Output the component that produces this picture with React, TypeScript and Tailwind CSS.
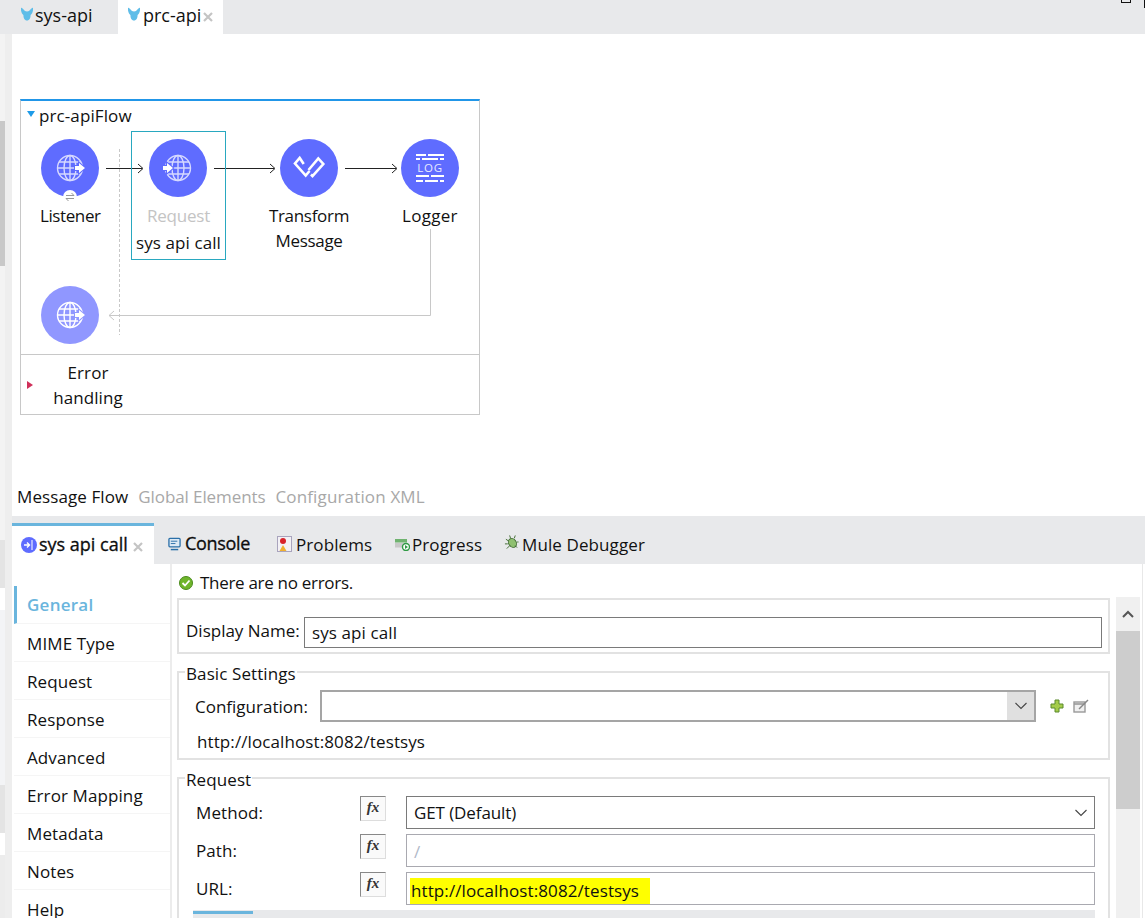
import type { ReactNode } from 'react';

const NAV_ITEMS = ['MIME Type', 'Request', 'Response', 'Advanced', 'Error Mapping', 'Metadata', 'Notes', 'Help'];

function MuleIcon({ className }: { className?: string }) {
  return (
    <svg viewBox="0 0 12 14" className={className}>
      <path d="M0 1 C1 0 2.5 3 4 4 C5 4.6 7 4.6 8 4 C9.5 3 11 0 12 1 C12.4 4 11 7 9.6 8 C9.6 11 8.4 13.5 6 13.5 C3.6 13.5 2.4 11 2.4 8 C1 7 -.4 4 0 1 Z" fill="#5fbde8" />
    </svg>
  );
}

function CloseIcon({ className }: { className?: string }) {
  return (
    <svg viewBox="0 0 10 10" className={className}>
      <path d="M1 1 L9 9 M9 1 L1 9" stroke="#c4c4c4" strokeWidth="2.2" />
    </svg>
  );
}

function GlobeIcon({ out, bg = '#5f6cff', color = '#d6d9ff' }: { out: boolean; bg?: string; color?: string }) {
  return (
    <svg viewBox="0 0 30 28" className="h-7 w-[30px]" fill="none" stroke={color} strokeWidth="1.4">
      <circle cx="15" cy="14" r="12.5" />
      <ellipse cx="15" cy="14" rx="6" ry="12.5" />
      <path d="M15 1.5 V26.5 M4 8 H26 M2.5 14 H27.5 M4 20 H26" />
      {out ? (
        <path d="M20 12 H24 V9 L30 14 L24 19 V16 H20 Z" fill="#fff" stroke={bg} strokeWidth="2" paintOrder="stroke" />
      ) : (
        <path d="M0 12 H4 V9 L10 14 L4 19 V16 H0 Z" fill="#fff" stroke={bg} strokeWidth="2" paintOrder="stroke" />
      )}
    </svg>
  );
}

function FlowNode({ left, top, tone, children }: { left: string; top: string; tone: string; children: ReactNode }) {
  return (
    <div className={`absolute flex h-[58px] w-[58px] items-center justify-center rounded-full ${left} ${top} ${tone}`}>
      {children}
    </div>
  );
}

function TransformIcon() {
  return (
    <svg viewBox="0 0 40 36" className="h-[36px] w-[40px]" fill="none" stroke="#fff" strokeWidth="2.6">
      <path d="M14.7 14 L10.7 8 L6 13.5 L16.7 25.5 L20.5 21" />
      <path d="M19.5 20 L29.3 8.5 L34.3 14 L23.5 26 L22 24.5" />
    </svg>
  );
}

function LogIcon() {
  return (
    <svg viewBox="0 0 28 28" className="h-7 w-7">
      <path d="M0 1 H10 M12 1 H28 M0 5 H4 M6 5 H22 M24 5 H28 M0 22 H13 M15 22 H28 M0 27 H7 M9 27 H22 M24 27 H28" stroke="#fff" strokeWidth="2" />
      <text x="14" y="18" textAnchor="middle" fontSize="11.5" fill="#e8eaff" letterSpacing=".7">LOG</text>
    </svg>
  );
}

function Flow() {
  return (
    <div className="relative h-[316px] w-[460px] border border-t-2 border-[#c8c8c8] border-t-[#2196e8]">
      <div className="flex h-[29px] items-center pl-[6px]">
        <span className="mb-[4px] h-0 w-0 border-x-[4px] border-t-[6px] border-x-transparent border-t-[#1e9be8]" />
        <span className="ml-[4px] mt-[1px]">prc-apiFlow</span>
      </div>

      {/* connectors */}
      <svg className="absolute left-[-1px] top-[-2px] h-[316px] w-[460px]" viewBox="0 0 460 316" fill="none">
        <path d="M99.5 50 V236" stroke="#c8c8c8" strokeDasharray="3 2" />
        <path d="M86 69.5 H122 M118 65 L123 69.5 L118 74" stroke="#222" />
        <path d="M194 69.5 H254 M250 65 L255 69.5 L250 74" stroke="#222" />
        <path d="M325 69.5 H376 M372 65 L377 69.5 L372 74" stroke="#222" />
        <path d="M410.5 130 V216.5 H89 M94 212 L89 216.5 L94 221" stroke="#c8c8c8" />
      </svg>

      <FlowNode left="left-[20px]" top="top-[38px]" tone="bg-[#5f6cff]">
        <GlobeIcon out />
        <span className="absolute bottom-[-7px] left-[22px] flex h-[14px] w-[14px] items-center justify-center rounded-full bg-white">
          <svg viewBox="0 0 10 10" className="h-[10px] w-[10px]" fill="none" stroke="#999" strokeWidth="1">
            <path d="M1 3.5 H9 L6.5 1 M9 6.5 H1 L3.5 9" />
          </svg>
        </span>
      </FlowNode>
      <FlowNode left="left-[128px]" top="top-[38px]" tone="bg-[#5f6cff]">
        <GlobeIcon out={false} />
      </FlowNode>
      <FlowNode left="left-[259px]" top="top-[38px]" tone="bg-[#5f6cff]">
        <TransformIcon />
      </FlowNode>
      <FlowNode left="left-[380px]" top="top-[38px]" tone="bg-[#5f6cff]">
        <LogIcon />
      </FlowNode>
      <FlowNode left="left-[20px]" top="top-[185px]" tone="bg-[#9097ff]">
        <GlobeIcon out bg="#9097ff" color="#ffffff" />
      </FlowNode>

      <span className="absolute left-[19px] top-[102px] leading-[25px] tracking-[-0.4px]">Listener</span>

      <div className="absolute left-[110px] top-[30px] flex h-[129px] w-[95px] flex-col items-center border border-[#29a8c0] pt-[71px] leading-[25px]">
        <span className="tracking-[-0.2px] text-[#c4c4c4]">Request</span>
        <span className="mt-[2px] whitespace-nowrap">sys api call</span>
      </div>

      <div className="absolute left-[238px] top-[102px] w-[100px] text-center leading-[25px] tracking-[-0.3px]">
        Transform
        <br />
        Message
      </div>
      <span className="absolute left-[381px] top-[102px] leading-[25px] tracking-[0.3px]">Logger</span>

      <div className="absolute bottom-0 left-0 flex h-[60px] w-full items-center border-t border-[#c8c8c8] pl-[6px]">
        <span className="h-0 w-0 border-y-[4px] border-l-[6px] border-y-transparent border-l-[#d0305a]" />
        <div className="ml-[20px] w-[70px] text-center leading-[25px]">
          Error
          <br />
          handling
        </div>
      </div>
    </div>
  );
}

function BottomTab({ icon, label, width, gap }: { icon: ReactNode; label: string; width: string; gap: string }) {
  return (
    <div className={`flex items-center ${width} ${gap}`}>
      {icon}
      <span className="pt-[2px]">{label}</span>
    </div>
  );
}

function FxButton() {
  return (
    <div className="flex h-[25px] w-[26px] items-center justify-center border border-[#ddd] border-l-[#888] border-t-[#888] bg-[#fafafa] pb-[3px] font-['Liberation_Serif',serif] text-[15px] font-bold italic text-[#333]">
      fx
    </div>
  );
}

function Chevron() {
  return (
    <svg viewBox="0 0 12 8" className="h-[8px] w-[12px]" fill="none" stroke="#444" strokeWidth="1.1">
      <path d="M.5 1 L6 6.5 L11.5 1" />
    </svg>
  );
}

function RequestRow({ label, children, border }: { label: string; children: ReactNode; border: string }) {
  return (
    <div className="flex h-[33px] items-start">
      <span className="w-[164px] self-center">{label}</span>
      <FxButton />
      <div className={`ml-[20px] flex h-[33px] flex-1 items-center border px-[7px] ${border}`}>{children}</div>
    </div>
  );
}

export default function App() {
  return (
    <div className="relative flex h-[918px] w-[1145px] flex-col overflow-hidden bg-white font-['Open_Sans',sans-serif] text-[17px] tracking-[0.1px] text-[#111]">
      {/* bits of the window frame caught in the screenshot */}
      <div className="absolute right-[14px] top-0 h-[3px] w-[10px] border-x border-b border-[#111]" />
      <div className="absolute right-0 top-0 h-[8px] w-[1px] bg-[#111]" />

      {/* editor tabs */}
      <div className="flex h-[34px] shrink-0 items-end bg-[#e8e9eb] pl-[21px] text-[18px] tracking-normal">
        <div className="flex h-[34px] w-[97px] items-center gap-[2px]">
          <MuleIcon className="mb-[6px] h-[14px] w-[12px]" />
          <span className="mb-[4px]">sys-api</span>
        </div>
        <div className="flex h-[34px] w-[105px] items-center bg-white pl-[10px]">
          <MuleIcon className="mb-[6px] h-[14px] w-[12px]" />
          <span className="mb-[4px] ml-[3px]">prc-api</span>
          <CloseIcon className="ml-[2px] h-[10px] w-[10px]" />
        </div>
      </div>

      <div className="flex min-h-0 flex-1">
        {/* left gutter */}
        <div className="flex w-[12px] shrink-0 bg-[#eeeeee]">
          <div className="w-[5px]">
            <div className="h-[87px] bg-[#f3f3f3]" />
            <div className="h-[145px] bg-[#c8c8c8]" />
            <div className="h-[274px] bg-[#f3f3f3]" />
            <div className="h-[48px] bg-[#e4e4e4]" />
            <div className="h-[22px] bg-white" />
            <div className="h-[175px] bg-[#f3f4f6]" />
            <div className="h-[48px] bg-[#e4e4e4]" />
            <div className="h-[22px] bg-white" />
            <div className="h-[63px] bg-[#ececec]" />
          </div>
        </div>

        <div className="flex min-w-0 flex-1 flex-col">
          {/* canvas */}
          <div className="h-[482px] shrink-0 pl-[8px] pt-[65px]">
            <Flow />
            <div className="ml-[-3px] mt-[70px] flex h-[24px] items-center gap-[10px] whitespace-nowrap">
              <span className="tracking-[0.1px]">Message Flow</span>
              <span className="tracking-[-0.1px] text-[#a8a8a8]">Global Elements</span>
              <span className="tracking-[0.15px] text-[#a8a8a8]">Configuration XML</span>
            </div>
          </div>

          {/* views tab bar */}
          <div className="flex h-[48px] shrink-0 items-end bg-[#e8e9eb]">
            <div className="flex h-[41px] w-[142px] items-center border-t-[3px] border-[#6ab5dd] bg-white pl-[9px]">
              <span className="flex h-4 w-4 items-center justify-center rounded-full bg-[#5f6cff]">
                <svg viewBox="0 0 12 12" className="h-3 w-3" fill="none" stroke="#d6d9ff">
                  <path d="M9 1 V11" strokeWidth="1.4" />
                  <path d="M1 6 H6 M4 3.5 L6.5 6 L4 8.5" stroke="#fff" strokeWidth="1.4" />
                </svg>
              </span>
              <span className="mb-[2px] ml-[2px] whitespace-nowrap text-[18px] tracking-normal [-webkit-text-stroke:0.3px_#000]">sys api call</span>
              <CloseIcon className="ml-[5px] mt-[4px] h-[10px] w-[10px]" />
            </div>
            <div className="flex h-[41px] items-center whitespace-nowrap pl-[14px]">
              <div className="flex w-[109px] items-center gap-[4px]">
                <svg viewBox="0 0 14 14" className="h-[14px] w-[13px]">
                  <rect x="1" y="1" width="12" height="9" rx="1" fill="#dce9f5" stroke="#2a6fa8" strokeWidth="1.4" />
                  <path d="M3 4 H10 M3 6.5 H8" stroke="#2a6fa8" />
                  <path d="M3 13 H11" stroke="#2a6fa8" strokeWidth="1.6" />
                </svg>
                <span className="text-[18px] tracking-[-0.3px] [-webkit-text-stroke:0.3px_#000]">Console</span>
              </div>
              <BottomTab
                width="w-[118px]"
                gap="gap-[4px]"
                icon={
                  <svg viewBox="0 0 15 16" className="h-[16px] w-[15px]">
                    <rect x=".5" y=".5" width="14" height="15" fill="#f3f1f5" stroke="#a9a4bd" />
                    <circle cx="6" cy="5" r="3" fill="#d8232a" />
                    <path d="M6 9 L9.5 15 H2.5 Z" fill="#f0b030" />
                  </svg>
                }
                label="Problems"
              />
              <BottomTab
                width="w-[109px]"
                gap="gap-[2px]"
                icon={
                  <svg viewBox="0 0 15 13" className="mt-[2px] h-[13px] w-[15px]">
                    <rect x="0" y="1" width="12" height="3.5" fill="#6fb36f" />
                    <rect x="0" y="5" width="9" height="4.5" fill="#c8c8c8" />
                    <circle cx="11" cy="9" r="3.5" fill="#fff" stroke="#2f9a44" strokeWidth="1.4" />
                    <path d="M10 7 L13 9 L10 11 Z" fill="#2f9a44" />
                  </svg>
                }
                label="Progress"
              />
              <BottomTab
                width="w-[160px]"
                gap="gap-[3px]"
                icon={
                  <svg viewBox="0 0 16 16" className="mb-[3px] h-[16px] w-[15px]">
                    <ellipse cx="9" cy="9" rx="4" ry="5" transform="rotate(-35 9 9)" fill="#8fc070" stroke="#3f6a30" />
                    <path d="M2 5 L5 7 M6 1 L7 4 M12 1 L11 4 M1 10 H4 M14 8 H15.5 M3 15 L6 12 M14 14 L12 12" stroke="#3f6a30" />
                  </svg>
                }
                label="Mule Debugger"
              />
            </div>
          </div>

          {/* properties */}
          <div className="flex min-h-0 flex-1">
            <div className="w-[160px] shrink-0 border-r-2 border-[#ececec] pl-[2px] pt-[22px]">
              <div className="flex h-[38px] items-center border-b border-l-[3px] border-[#f5f5f5] border-l-[#6ab5dd] pl-[10px] font-semibold tracking-[0.25px] text-[#6ab5dd]">
                General
              </div>
              {NAV_ITEMS.map((item) => (
                <div key={item} className="flex h-[38px] items-center border-b border-[#f5f5f5] pl-[13px] pt-[2px]">
                  {item}
                </div>
              ))}
            </div>

            <div className="ml-[5px] w-[933px] shrink-0 pt-[9px]">
              <div className="flex h-[20px] items-center pl-[2px]">
                <svg viewBox="0 0 14 14" className="h-[14px] w-[14px]">
                  <circle cx="7" cy="7" r="6.5" fill="#6fb52c" stroke="#4a8a1c" />
                  <path d="M3.5 7 L6 9.5 L10.5 4.5" fill="none" stroke="#fff" strokeWidth="1.8" />
                </svg>
                <span className="ml-[7px] tracking-[-0.3px]">There are no errors.</span>
              </div>

              <div className="mt-[5px] flex h-[56px] items-end border-2 border-[#e2e2e2] pb-[4px] pl-[7px] pr-[6px]">
                <span className="w-[118px] self-center whitespace-nowrap pt-[14px] tracking-[0px]">Display Name:</span>
                <div className="flex h-[31px] flex-1 items-center border border-[#7a7a7a] px-[7px]">sys api call</div>
              </div>

              <fieldset className="mt-[4px] h-[102px] border-2 border-[#e2e2e2] px-[16px] pt-[4px]">
                <legend className="ml-[-10px] px-[1px] pt-[4px] leading-[24px]">Basic Settings</legend>
                <div className="flex items-center">
                  <span className="w-[125px] whitespace-nowrap pt-[2px] tracking-[0px]">Configuration:</span>
                  <div className="flex h-[32px] w-[716px] items-stretch border-2 border-[#a5a5a5]">
                    <div className="flex-1 bg-white" />
                    <div className="flex w-[27px] items-center justify-center bg-[#e0e0e0]">
                      <Chevron />
                    </div>
                  </div>
                  <svg viewBox="0 0 14 14" className="ml-[14px] h-[14px] w-[14px]">
                    <path d="M5 1 H9 V5 H13 V9 H9 V13 H5 V9 H1 V5 H5 Z" fill="#a4cc4a" stroke="#5a8a2c" />
                  </svg>
                  <svg viewBox="0 0 16 14" className="ml-[9px] h-[14px] w-[16px]" fill="none">
                    <rect x="1" y="3" width="11" height="10" fill="#f0f0f0" stroke="#999" strokeWidth="1.4" />
                    <path d="M1 5 H12" stroke="#999" strokeWidth="1.6" />
                    <path d="M6 10 L15 1" stroke="#888" strokeWidth="1.5" />
                  </svg>
                </div>
                <div className="ml-[2px] mt-[8px] leading-[24px]">http://localhost:8082/testsys</div>
              </fieldset>

              <fieldset className="mt-[4px] h-[160px] border-2 border-b-0 border-[#e2e2e2] pl-[17px] pr-[13px] pt-[4px]">
                <legend className="ml-[-11px] px-[1px] pt-[4px] leading-[24px]">Request</legend>
                <div className="flex flex-col gap-[5px]">
                  <RequestRow label="Method:" border="border-[#7a7a7a] justify-between">
                    <span className="tracking-[-0.1px]">GET (Default)</span>
                    <Chevron />
                  </RequestRow>
                  <RequestRow label="Path:" border="border-[#a9a9b0]">
                    <span className="pt-[3px] text-[#b0b8c8]">/</span>
                  </RequestRow>
                  <RequestRow label="URL:" border="border-[#a9a9b0] pl-[3px]">
                    <span className="flex h-[26px] w-[240px] items-center self-end bg-[#ffff00] pl-[1px]">http://localhost:8082/testsys</span>
                  </RequestRow>
                </div>
                <div className="ml-[-3px] mt-[5px] h-[8px] bg-[#e8e9eb] pt-[1px]">
                  <div className="h-[3px] w-[60px] bg-[#6ab5dd]" />
                </div>
              </fieldset>
            </div>

            {/* scrollbar */}
            <div className="ml-[6px] mt-[33px] flex w-[24px] shrink-0 flex-col bg-[#f0f0f0]">
              <div className="flex h-[34px] items-center justify-center">
                <svg viewBox="0 0 12 8" className="h-[8px] w-[12px]" fill="none" stroke="#555" strokeWidth="2">
                  <path d="M1 7 L6 2 L11 7" />
                </svg>
              </div>
              <div className="h-[178px] bg-[#cdcdcd]" />
            </div>
            <div className="ml-[2px] w-[1px] bg-[#e8e8e8]" />
          </div>
        </div>
      </div>
    </div>
  );
}
